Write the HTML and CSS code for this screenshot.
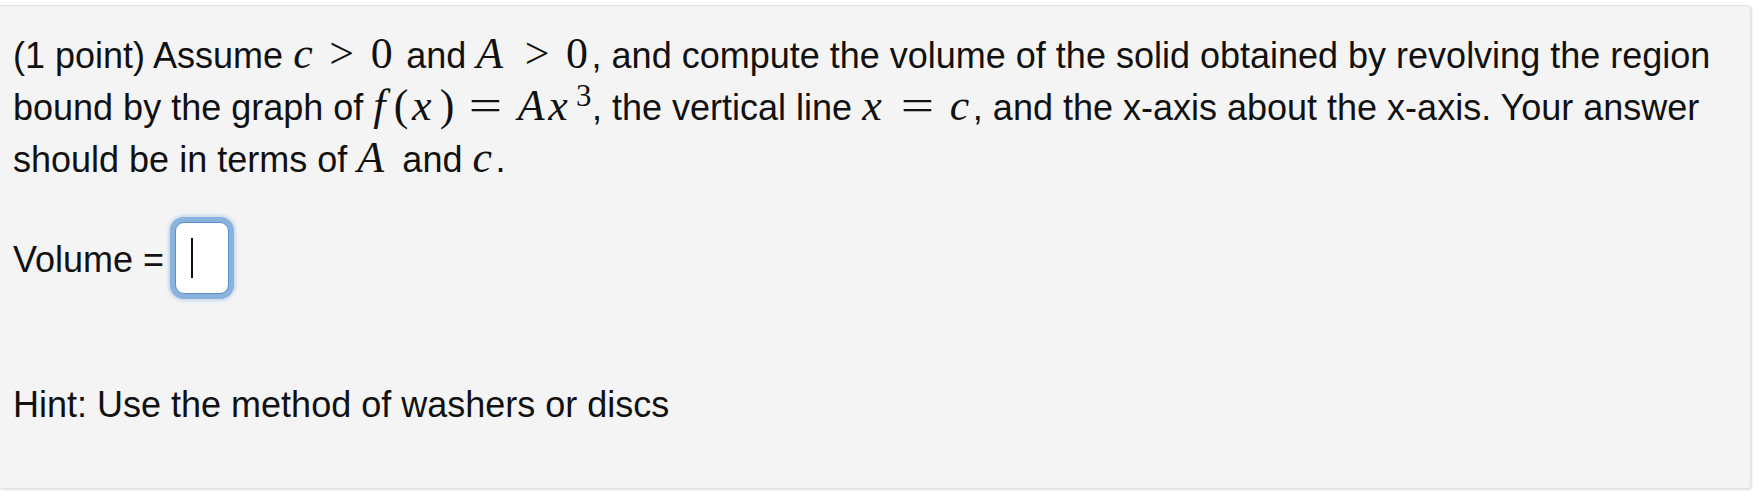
FILE: index.html
```html
<!DOCTYPE html>
<html>
<head>
<meta charset="utf-8">
<link rel="stylesheet" href="styles.css">
</head>
<body>
<div class="problem">
  <p class="text">(1 point) Assume <span class="m"><i>c</i><span class="rel">&gt;</span>0</span> and <span class="m"><i class="w">A</i><span class="rel">&gt;</span>0</span>, and compute the volume of the solid obtained by revolving the region<br>bound by the graph of <span class="m"><i class="w">f</i>(<i class="w">x</i>)<span class="rel eq">=</span><i>A</i><i class="w">x</i><sup>3</sup></span>, the vertical line <span class="m"><i class="w">x</i><span class="rel eq">=</span><i>c</i></span>, and the x-axis about the x-axis. Your answer<br>should be in terms of <span class="m"><i class="w">A</i></span> and <span class="m"><i>c</i></span>.</p>
  <div class="answer">
    <span class="label">Volume =</span>
    <span class="input"><span class="caret"></span></span>
  </div>
  <p class="hint">Hint: Use the method of washers or discs</p>
</div>
</body>
</html>
```

FILE: styles.css
```css
html, body {
  margin: 0;
  padding: 0;
  background: #ffffff;
}

body {
  font-family: "Liberation Sans", Arial, Helvetica, sans-serif;
  color: #111111;
  width: 1758px;
  height: 499px;
  overflow: hidden;
}

.problem {
  margin-top: 5px;
  width: 1751px;
  height: 484px;
  box-sizing: border-box;
  background: #f4f4f4;
  border: 1px solid #e2e2e2;
  border-left: none;
  border-radius: 0 4px 4px 0;
  box-shadow: 1px 1px 2px rgba(0, 0, 0, 0.12);
  padding: 24px 0 0 13px;
  font-size: 36px;
}

.text {
  margin: 0;
  line-height: 52px;
}

.m {
  font-family: "Liberation Serif", "Times New Roman", serif;
  font-size: 1.22em;
  line-height: 0;
  letter-spacing: 0.08em;
  white-space: nowrap;
}

.m i {
  font-style: italic;
}

.m i.w {
  padding-right: 0.11em;
}

.rel {
  padding: 0 0.3em;
}

.rel.eq {
  display: inline-block;
  padding: 0 0.36em;
  transform: scaleX(1.35);
}

.m sup {
  font-size: 0.7em;
  line-height: 0;
  letter-spacing: 0.02em;
  vertical-align: 0.45em;
}

.answer {
  display: flex;
  align-items: center;
  margin-top: 34px;
  height: 80px;
}

.label {
  line-height: 52px;
}

.input {
  margin-left: 11px;
  margin-bottom: 4px;
  width: 54px;
  height: 72px;
  box-sizing: border-box;
  background: #ffffff;
  border: 1px solid #5b8fc9;
  border-radius: 9px;
  box-shadow: 0 0 0 5px rgba(126, 170, 218, 0.85), 0 0 3px 7px rgba(140, 180, 225, 0.4);
  display: flex;
  align-items: center;
  padding-left: 15px;
}

.caret {
  width: 2px;
  height: 40px;
  background: #111111;
}

.hint {
  margin: 79px 0 0 0;
  line-height: 52px;
}
```
